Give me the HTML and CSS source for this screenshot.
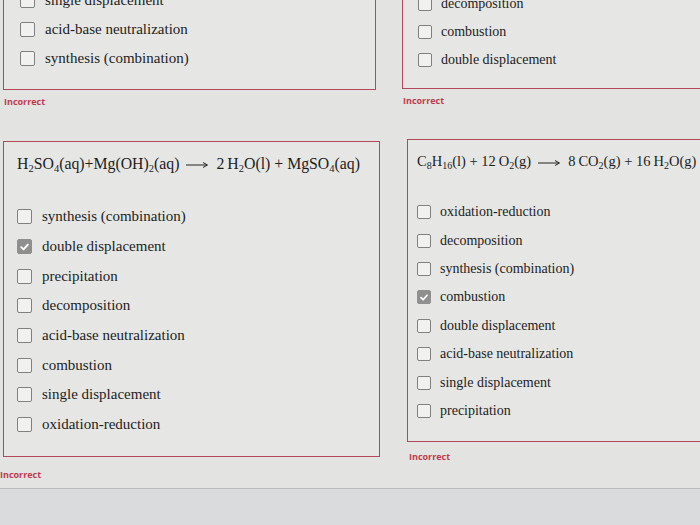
FILE: index.html
```html
<!DOCTYPE html>
<html>
<head>
<meta charset="utf-8">
<link rel="stylesheet" href="styles.css">
</head>
<body>
<div class="page">
  <div class="col col-left">
    <div class="card card-top">
      <div class="opts">
        <div class="opt"><span class="box"></span>single displacement</div>
        <div class="opt"><span class="box"></span>acid-base neutralization</div>
        <div class="opt"><span class="box"></span>synthesis (combination)</div>
      </div>
    </div>
    <div class="status">Incorrect</div>
    <div class="card card-main">
      <div class="eq">H<sub>2</sub>SO<sub>4</sub>(aq)+Mg(OH)<sub>2</sub>(aq)<svg class="arrow" width="24" height="8" viewBox="0 0 24 8"><path d="M1 4H22M18 1.5L22.5 4L18 6.5" fill="none" stroke="#222" stroke-width="1"/></svg>2<span class="thin"></span>H<sub>2</sub>O(l) + MgSO<sub>4</sub>(aq)</div>
      <div class="opts">
        <div class="opt"><span class="box"></span>synthesis (combination)</div>
        <div class="opt"><span class="box checked"><svg width="14" height="14" viewBox="0 0 14 14"><path d="M3.5 7.2L6 9.6L10.6 4.4" fill="none" stroke="#fff" stroke-width="2" stroke-linecap="round" stroke-linejoin="round"/></svg></span>double displacement</div>
        <div class="opt"><span class="box"></span>precipitation</div>
        <div class="opt"><span class="box"></span>decomposition</div>
        <div class="opt"><span class="box"></span>acid-base neutralization</div>
        <div class="opt"><span class="box"></span>combustion</div>
        <div class="opt"><span class="box"></span>single displacement</div>
        <div class="opt"><span class="box"></span>oxidation-reduction</div>
      </div>
    </div>
    <div class="status status-shift">Incorrect</div>
  </div>
  <div class="col col-right">
    <div class="card card-top">
      <div class="opts">
        <div class="opt"><span class="box"></span>decomposition</div>
        <div class="opt"><span class="box"></span>combustion</div>
        <div class="opt"><span class="box"></span>double displacement</div>
      </div>
    </div>
    <div class="status">Incorrect</div>
    <div class="card card-main">
      <div class="eq">C<sub>8</sub>H<sub>16</sub>(l) + 12<span class="thin"></span>O<sub>2</sub>(g)<svg class="arrow" width="24" height="8" viewBox="0 0 24 8"><path d="M1 4H22M18 1.5L22.5 4L18 6.5" fill="none" stroke="#222" stroke-width="1"/></svg>8<span class="thin"></span>CO<sub>2</sub>(g) + 16<span class="thin"></span>H<sub>2</sub>O(g)</div>
      <div class="opts">
        <div class="opt"><span class="box"></span>oxidation-reduction</div>
        <div class="opt"><span class="box"></span>decomposition</div>
        <div class="opt"><span class="box"></span>synthesis (combination)</div>
        <div class="opt"><span class="box checked"><svg width="13" height="13" viewBox="0 0 14 14"><path d="M3.5 7.2L6 9.6L10.6 4.4" fill="none" stroke="#fff" stroke-width="2" stroke-linecap="round" stroke-linejoin="round"/></svg></span>combustion</div>
        <div class="opt"><span class="box"></span>double displacement</div>
        <div class="opt"><span class="box"></span>acid-base neutralization</div>
        <div class="opt"><span class="box"></span>single displacement</div>
        <div class="opt"><span class="box"></span>precipitation</div>
      </div>
    </div>
    <div class="status">Incorrect</div>
  </div>
</div>
<div class="strip"></div>
</body>
</html>
```
FILE: styles.css
```css
html, body {
  margin: 0;
  padding: 0;
}
*, *::before, *::after {
  box-sizing: border-box;
}
body {
  width: 700px;
  height: 525px;
  overflow: hidden;
  background: #e3e4e2;
  font-family: "Liberation Serif", "Times New Roman", serif;
  color: #1c1c1c;
}
.page {
  height: 488px;
  overflow: hidden;
  display: grid;
  grid-template-columns: 377px 1fr;
  column-gap: 22px;
  padding-left: 3px;
}
.col {
  display: flex;
  flex-direction: column;
  min-width: 0;
}
.card {
  border: 1px solid #b4485a;
  background: #e6e7e5;
}
.col-left .card-top {
  margin-top: -15px;
  width: 373px;
  padding: 0 0 16px 16px;
}
.col-left .card-main {
  margin-top: 33px;
  width: 377px;
  padding: 12px 0 16px 13px;
}
.col-right .card-top {
  margin-top: -11px;
  margin-right: -20px;
  padding: 0 0 14px 15px;
}
.col-right .card-main {
  margin-top: 32px;
  margin-left: 5px;
  margin-right: -20px;
  padding: 11px 0 16px 9px;
}
.eq {
  font-size: 15.8px;
  line-height: 20px;
  height: 20px;
  white-space: nowrap;
}
.col-right .eq {
  font-size: 14.5px;
}
.eq sub {
  font-size: 10.5px;
  vertical-align: -3px;
  line-height: 0;
}
.col-right .eq sub {
  font-size: 10px;
}
.thin {
  display: inline-block;
  width: 3px;
}
.arrow {
  display: inline-block;
  vertical-align: middle;
  margin: 0 7px 0 6px;
}
.opts {
  display: flex;
  flex-direction: column;
}
.col-left .card-main .opts {
  margin-top: 28px;
}
.col-right .card-main .opts {
  margin-top: 27px;
}
.opt {
  display: flex;
  align-items: center;
  font-size: 15px;
  height: 29px;
  white-space: nowrap;
}
.col-left .card-main .opt {
  height: 29.7px;
}
.col-right .opt {
  font-size: 14px;
  height: 28px;
}
.col-right .card-main .opt {
  height: 28.4px;
}
.box {
  flex: none;
  width: 15px;
  height: 15px;
  border: 1px solid #808080;
  border-radius: 2px;
  background: #f1f1f0;
  margin-right: 10px;
  display: flex;
  align-items: center;
  justify-content: center;
}
.col-right .box {
  width: 14px;
  height: 14px;
  margin-right: 9px;
}
.box.checked {
  background: #8f8f8f;
  border-color: #8f8f8f;
}
.status {
  font-family: "Open Sans", "Liberation Sans", sans-serif;
  font-weight: 700;
  font-size: 9px;
  line-height: 12px;
  color: #c03a4e;
  margin-top: 6px;
  margin-left: 1px;
}
.col-left .status-shift {
  margin-top: 12px;
  margin-left: -3px;
}
.col-right .card-main + .status {
  margin-top: 9px;
  margin-left: 7px;
}
.strip {
  height: 37px;
  border-top: 1px solid #b9babc;
  background: #dadbdd;
}
```
